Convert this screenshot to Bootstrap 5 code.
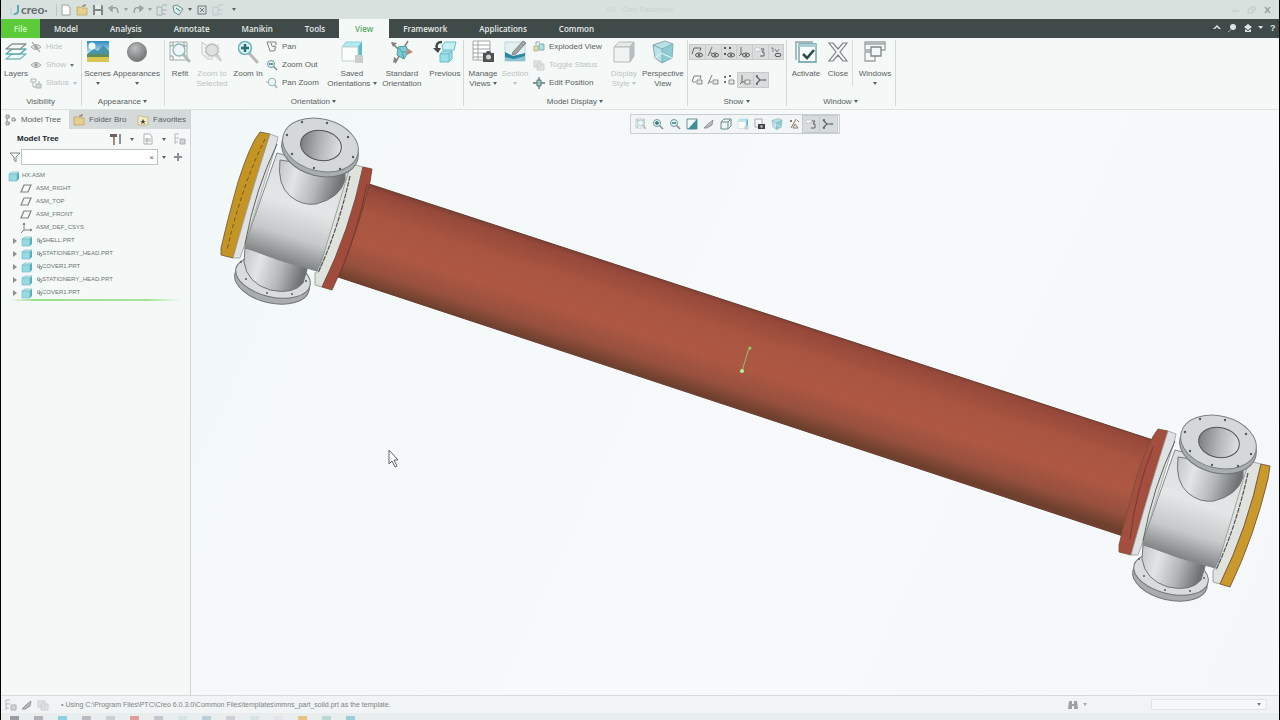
<!DOCTYPE html>
<html lang="en">
<head>
<meta charset="utf-8">
<meta name="viewport" content="width=device-width, initial-scale=1">
<title>Creo Parametric</title>
<link rel="stylesheet" href="https://cdn.jsdelivr.net/npm/bootstrap@5.3.0/dist/css/bootstrap.min.css">
<style>
  :root { --ink:#59605e; --dim:#bcc3c2; --teal:#4aa3ad; --rule:#d3dad8; --chrome:#f4f9f8; }
  body { font-family:"Liberation Sans",sans-serif; font-size:8px; line-height:10px; color:var(--ink); background:#000; }
  .btn { --bs-btn-font-size:8px; --bs-btn-line-height:10px; --bs-btn-padding-x:0; --bs-btn-padding-y:0; --bs-btn-border-width:0; --bs-btn-border-radius:0; --bs-btn-color:var(--ink); --bs-btn-disabled-color:var(--dim); --bs-btn-disabled-opacity:1; font-family:inherit; }
  svg { flex:none; display:block; }
  .i12 { width:12px; height:12px; }
  .i24 { width:24px; height:24px; }
  .caret { display:inline-block; border:2px solid transparent; border-top:3px solid currentColor; border-bottom:0; vertical-align:middle; flex:none; }
  .app { background:var(--chrome); margin:0 1px; }

  .titlebar { height:19px; background:#d9e1de; }
  .brand { font:bold 12px/14px "Lato",sans-serif; color:#626d6b; }
  .quick { border-left:1px solid #bcc6c3; margin-left:9px; padding-left:3px; }
  .wtitle { color:#cbd3d0; font-size:7px; }
  .tabbar { height:19px; background:#404a48; }
  .tabbar .btn { font:600 8px/19px "Open Sans",sans-serif; height:19px; color:#e6ebe9; text-align:center; }
  .tabbar .file-tab { background:#5bcb3a; color:#c9f7ba; width:39px; }
  .tabbar .active { background:var(--chrome); color:#5ca868; width:50px; }
  .tabset { gap:32px; margin:0 14px; }

  .ribbon { height:72px; border-bottom:1px solid #dbe2e1; }
  .rgroup { border-right:1px solid var(--rule); margin:2px 0 3px; padding-right:2px; padding-left:1px; }
  .g-vis { width:81px; } .g-app { width:83px; } .g-ori { width:299px; } .g-disp { width:224px; } .g-show { width:99px; } .g-win { width:109px; }
  .rbody { height:57px; flex:none; }
  .vrule { width:1px; height:46px; background:var(--rule); }
  .big { width:36px; flex:none; white-space:nowrap; }
  .big.narrow { width:28px; }
  .big.wide { width:50px; }
  .big svg { margin:0 auto 5px; }
  .stack { height:54px; margin-top:-2px; flex:none; white-space:nowrap; }
  .tog { width:16px; height:16px; background:#d9dedd; border:1px solid #c5cccb; border-right-width:0; }
  .tog:last-child { border-right-width:1px; }
  .tog.off { background:none; border-color:transparent; }
  .tog .i12 { margin:1px; }

  .tree { width:190px; border-right:1px solid #cfd6d5; }
  .tree-tabs { height:19px; background:#d4dada; }
  .tree-tabs .btn { height:19px; }
  .tree-tabs .active { background:var(--chrome); }
  .tree-tools { height:20px; }
  .tree-find input { height:16px; border:1px solid #bcc5c4; font-size:8px; padding:0 4px; border-radius:0; background:#fff; }
  .tree-list { font-size:6px; line-height:13px; color:#6b7271; }
  .tree-list li { height:13px; }
  .twist { border:3px solid transparent; border-left:4px solid #8b9291; border-right:0; width:4px; }
  .leaf { padding-left:19px; }
  .root { padding-left:7px; gap:2px; }
  .endline { height:2px; background:linear-gradient(90deg,transparent,#9be08c 15%,#a5e499 80%,transparent); }

  .view { background:linear-gradient(115deg,#f2f8f8,#f7f9fb 50%,#f5f8fb); min-height:0; }
  .floatbar { top:4px; border:1px solid #c8cfce; background:#f1f5f5; height:20px; padding:1px 2px; white-space:nowrap; }
  .floatbar .btn { width:17px; height:16px; padding:2px; }
  .floatbar .on { background:#d6dbdb; outline:1px solid #c5cbcb; }
  .model { width:100%; height:100%; }

  .status { height:18px; border-top:1px solid #d5dbdb; background:#f0f4f4; font-size:7px; color:#7c8382; }
  .status select { width:116px; height:11px; font-size:7px; padding:0; border:1px solid #dfe4e4; background:#f5f8f8; appearance:none; }
  .pick { margin-right:12px; }
  .pick .caret { right:6px; top:4px; }
  .taskbar { height:7px; background:#e8eeee; padding-left:9px; gap:15px; overflow:hidden; }
  .taskbar i { width:9px; height:4px; opacity:.6; }
</style>
</head>
<body class="vh-100 overflow-hidden">

<svg class="position-absolute" width="0" height="0" aria-hidden="true">
  <defs>
    <radialGradient id="ball" cx=".4" cy=".3" r=".8"><stop offset="0" stop-color="#b9bdbd"/><stop offset="1" stop-color="#676c6d"/></radialGradient>
    <linearGradient id="sky" x2="0" y2="1"><stop offset="0" stop-color="#2b8cc4"/><stop offset="1" stop-color="#bfe3ec"/></linearGradient>
  </defs>
  <symbol id="layers" viewBox="0 0 24 24"><g fill="#f5fbfb" stroke-width="1.4" stroke-linejoin="round"><path d="M2 19l6-5h14l-6 5z" stroke="#7fbcc0"/><path d="M2 14l6-5h14l-6 5z" stroke="#59a9ae"/><path d="M2 9l6-5h14l-6 5z" stroke="#8b9694"/></g></symbol>
  <symbol id="eye" viewBox="0 0 12 12"><path d="M1 6q5-5 10 0q-5 5-10 0z" fill="#e1e5e5" stroke="#a2a9a8"/><circle cx="6" cy="6" r="1.7" fill="#989f9e"/></symbol>
  <symbol id="hide" viewBox="0 0 12 12"><path d="M1 6q5-5 10 0q-5 5-10 0z" fill="#e1e5e5" stroke="#a2a9a8"/><circle cx="6" cy="6" r="1.7" fill="#989f9e"/><path d="M2 1l8 10" stroke="#9aa1a0" stroke-width="1.2"/></symbol>
  <symbol id="statusi" viewBox="0 0 12 12"><path d="M1 2h5v3H1zM3 5v5h3" fill="none" stroke="#adb4b3"/><path d="M6 7h5v4H6zM9 7V4" fill="#d2d8d7" stroke="#adb4b3"/></symbol>
  <symbol id="scene" viewBox="0 0 24 24"><path d="M1 1h22v12H1z" fill="url(#sky)"/><circle cx="6" cy="6" r="3.5" fill="#f0fafb"/><path d="M1 14l7-5 4 2 5-6 6 6v5H1z" fill="#4a94ab"/><path d="M1 14h22v4H1z" fill="#5d8c5d"/><path d="M1 17h22v5H1z" fill="#d8c552"/></symbol>
  <symbol id="sphere" viewBox="0 0 24 24"><circle cx="12" cy="12" r="9.5" fill="url(#ball)" stroke="#7e8484"/></symbol>
  <symbol id="refit" viewBox="0 0 24 24"><path d="M2 2h17v18H2z" fill="#f7fbfb" stroke="#a4acab"/><path d="M5 2v4H2M16 2v4h3M5 20v-4H2" fill="none" stroke="#8e9695"/><path d="M15 14l6 7" stroke="#b2b9b8" stroke-width="3" stroke-linecap="round"/><circle cx="11" cy="10" r="6" fill="#edf7f7" stroke="#8fb4b5" stroke-width="1.4"/></symbol>
  <symbol id="zsel" viewBox="0 0 24 24"><path d="M2 2l4 4M2 2v12l5 5h6" fill="none" stroke="#c3c9c8"/><path d="M5 5h14v12H5z" fill="#eceff0" stroke="#c7cdcc" stroke-dasharray="2 2"/><path d="M16 14l5 7" stroke="#cdd2d1" stroke-width="3"/><circle cx="12" cy="10" r="6" fill="#dde1e1" stroke="#b8bfbe" stroke-width="1.4"/></symbol>
  <symbol id="zin" viewBox="0 0 24 24"><path d="M13 13l8 9" stroke="#bdb9b5" stroke-width="3" stroke-linecap="round"/><circle cx="9" cy="8" r="6.5" fill="#d7f0f3" stroke="#74b4bb" stroke-width="1.5"/><path d="M9 4v8M5 8h8" stroke="#2b6d73" stroke-width="2.4"/></symbol>
  <symbol id="pan" viewBox="0 0 12 12"><path d="M1 1h9v3M1 1l3 9h4l2-4-4-1-1-3" fill="#f3f6f6" stroke="#7c8483"/><path d="M9 4v6" stroke="#a2a9a8"/></symbol>
  <symbol id="zout12" viewBox="0 0 12 12"><path d="M7 7l4 4" stroke="#8c9493" stroke-width="1.7"/><circle cx="5" cy="5" r="3.5" fill="#dff1f2" stroke="#6b9da0"/><path d="M3 5h4" stroke="#316b6f" stroke-width="1.3"/></symbol>
  <symbol id="zin12" viewBox="0 0 12 12"><path d="M7 7l4 4" stroke="#8c9493" stroke-width="1.7"/><circle cx="5" cy="5" r="3.5" fill="#dff1f2" stroke="#6b9da0"/><path d="M3 5h4M5 3v4" stroke="#316b6f" stroke-width="1.3"/></symbol>
  <symbol id="pz12" viewBox="0 0 12 12"><path d="M8 7l3 4" stroke="#a9b0af" stroke-width="1.6"/><circle cx="6" cy="5" r="3.7" fill="#eff8f8" stroke="#91b7b8"/><path d="M2 5H0" stroke="#91b7b8"/></symbol>
  <symbol id="saved" viewBox="0 0 24 24"><path d="M2 7l4-5h16l-4 5z" fill="#b6e8ef" stroke="#8ed2dc"/><path d="M18 7l4-5v14l-4 5z" fill="#5bbccb"/><path d="M2 7h16v14H2z" fill="#fafdfd" stroke="#c4d0d0"/><path d="M15 15h8v8h-8z" fill="#c9cfce"/></symbol>
  <symbol id="stdori" viewBox="0 0 24 24"><path d="M2 3l8 8M18 1l-6 10M5 23l6-10" stroke="#8b817b" stroke-width="1.6"/><path d="M8 7l8-1 2 6-4 7-7-4z" fill="#7ecad4" stroke="#4c9fab"/><path d="M8 7l4 5 6 0M12 12l2 7" stroke="#4c9fab" fill="none"/><path d="M17 8l6 4-6 3z" fill="#b98b73"/><path d="M1 2l6 1-4 4zM3 23l1-6 4 3z" fill="#7e8482"/></symbol>
  <symbol id="prev" viewBox="0 0 24 24"><path d="M9 6l3-4h11l-2 8h-11z" fill="#c8eff4" stroke="#6dbcc7"/><path d="M7 14l3-3h9v8l-3 3H7z" fill="#9ae0e9" stroke="#6dbcc7"/><path d="M7 14h9v8M16 14l3-3" fill="none" stroke="#6dbcc7"/><path d="M9 2Q2 2 4 9" fill="none" stroke="#414846" stroke-width="2.4"/><path d="M0 8h8l-3 5z" fill="#414846"/></symbol>
  <symbol id="manage" viewBox="0 0 24 24"><path d="M2 1h17v19H2z" fill="#fff" stroke="#a0a8a7"/><path d="M2 5h17M2 9h17M2 13h17M2 17h17M7 1v19" stroke="#9ba5a5"/><path d="M12 13h3l1-2h3l1 2h3v9H12z" fill="#4b5251"/><circle cx="17.500" cy="17" r="2.500" fill="#cfd4d4"/></symbol>
  <symbol id="section" viewBox="0 0 24 24"><path d="M2 2h20v19H2z" fill="#e4f1f3" stroke="#c0d2d5"/><path d="M2 21v-9l8 4 12-3v8z" fill="#2e86a0"/><path d="M2 17l9 2 11-3v5H2z" fill="#8cc3d2"/><path d="M20 1l3 2-10 11-4 1 1-3z" fill="#9fa5a4" stroke="#666d6c" stroke-width=".7"/></symbol>
  <symbol id="explode" viewBox="0 0 12 12"><path d="M1 5h4v5H1z" fill="#e3dfae" stroke="#b3b68f"/><path d="M6 3h5v6H6z" fill="#b6e0e2" stroke="#7eb1b2"/><path d="M3 4V1h4" fill="none" stroke="#9da5a3"/></symbol>
  <symbol id="toggle" viewBox="0 0 12 12"><path d="M1 2h7v6H1zM4 5h7v6H4z" fill="#e0e4e4" stroke="#c8cecd"/></symbol>
  <symbol id="editpos" viewBox="0 0 12 12"><path d="M4 3h4v6H4z" fill="#9fc5c7" stroke="#527d7e"/><path d="M0 6h4M8 6h4M6 0v3M6 9v3" stroke="#6a7776" stroke-width="1.3"/></symbol>
  <symbol id="cube" viewBox="0 0 24 24"><path d="M2 7l5-5h15l-4 5z" fill="#e5e9e9" stroke="#b3bbba"/><path d="M18 7l4-5v14l-4 6z" fill="#b9c0bf" stroke="#b3bbba"/><path d="M2 7h16v15H2z" fill="#f0f3f3" stroke="#b3bbba"/></symbol>
  <symbol id="cube12" viewBox="0 0 12 12"><path d="M1 4l3-3h7v7l-3 3H1z" fill="#eef6f5" stroke="#6c8c88"/><path d="M1 4h7v7M8 4l3-3" fill="none" stroke="#6c8c88"/></symbol>
  <symbol id="persp" viewBox="0 0 24 24"><path d="M2 5l12-4 8 3-1 14-10 5-7-5z" fill="#b9e2e8" stroke="#8ba7aa"/><path d="M2 5l9 4 11-5M11 9v14" fill="none" stroke="#7fa7ac"/><path d="M11 9l11-5-1 14-10 5z" fill="#7bc0ca" opacity=".7"/><path d="M4 18l6-5 11 5" fill="none" stroke="#e9fbfc"/></symbol>
  <symbol id="activate" viewBox="0 0 24 24"><path d="M2 20V2h17" fill="none" stroke="#8fa0a2" stroke-width="1.4"/><path d="M5 4h17v18H5z" fill="#fbfefe" stroke="#5d9ca5" stroke-width="1.3"/><path d="M5 4h17v3H5z" fill="#a9cdd2"/><path d="M9 14l4 4 7-8" fill="none" stroke="#2b4c50" stroke-width="2.6"/></symbol>
  <symbol id="closeb" viewBox="0 0 24 24"><path d="M3 3h4l5 6 5-6h4l-7 9 7 9h-4l-5-6-5 6H3l7-9z" fill="#f6f8f8" stroke="#7d8584" stroke-width="1.2"/></symbol>
  <symbol id="wins" viewBox="0 0 24 24"><g fill="#f5f8f8" stroke="#9aa2a1" stroke-width="1.3"><path d="M2 2h20v8H2zM2 4h20"/><path d="M2 12h10v9H2z"/><path d="M8 7h10v9H8z" stroke="#7d8685"/></g></symbol>
  <symbol id="plane" viewBox="0 0 12 12"><path d="M1 9l3-7h7L8 9z" fill="none" stroke="#7e8180" stroke-width="1.200"/></symbol>
  <symbol id="csys" viewBox="0 0 12 12"><path d="M4 1v7h8M4 8l-3 3M3 3l1-2 1 2M10 7l2 1-2 1" fill="none" stroke="#7e8180"/></symbol>
  <symbol id="part" viewBox="0 0 12 12"><path d="M1 4l3-2h7L9 4z" fill="#c7eff3" stroke="#69b5bf" stroke-width=".6"/><path d="M9 4l2-2v7l-2 2z" fill="#5badb8"/><path d="M1 4h8v7H1z" fill="#96dbe3" stroke="#69b5bf" stroke-width=".6"/></symbol>
  <symbol id="link" viewBox="0 0 6 6"><path d="M.5.500h3v3h-3zM2.500 2.500h3v3h-2z" fill="none" stroke="#7e8685" stroke-width=".9"/></symbol>
  <symbol id="t1" viewBox="0 0 12 12"><path d="M1 8l2-6h7L9 5" fill="none" stroke="#636968"/><ellipse cx="8" cy="9" rx="3.500" ry="2" fill="#d4d8d7" stroke="#515756"/><circle cx="8" cy="9" r="1" fill="#444"/></symbol>
  <symbol id="t2" viewBox="0 0 12 12"><path d="M1 10L5 1M2 7h3" fill="none" stroke="#6d7372"/><ellipse cx="8" cy="9" rx="3.500" ry="2" fill="#d4d8d7" stroke="#515756"/><circle cx="8" cy="9" r="1" fill="#444"/></symbol>
  <symbol id="t3" viewBox="0 0 12 12"><path d="M1 1l2 2m0-2L1 3M6 1l2 2m0-2L6 3M1 7l2 2m0-2L1 9" stroke="#515756"/><ellipse cx="8" cy="9" rx="3.500" ry="2" fill="#d4d8d7" stroke="#515756"/><circle cx="8" cy="9" r="1" fill="#444"/></symbol>
  <symbol id="t4" viewBox="0 0 12 12"><path d="M3 1v7h3M3 8l-2 2" fill="none" stroke="#636968"/><ellipse cx="8" cy="9" rx="3.500" ry="2" fill="#d4d8d7" stroke="#515756"/><circle cx="8" cy="9" r="1" fill="#444"/></symbol>
  <symbol id="t5" viewBox="0 0 12 12"><path d="M1 2h5v3H1z" fill="#fafcfc" stroke="#b9bfbe" stroke-width=".7"/><path d="M7 3h3L8 6h2v4H6" fill="none" stroke="#5d6362"/></symbol>
  <symbol id="t6" viewBox="0 0 12 12"><path d="M1 2h2v4M5 3l2 3 2-3" fill="none" stroke="#7a807f"/><ellipse cx="8" cy="9" rx="3" ry="1.700" fill="#d4d8d7" stroke="#515756"/></symbol>
  <symbol id="t7" viewBox="0 0 12 12"><path d="M1 8l2-6h7L9 5M2 8h3" fill="none" stroke="#7a807f"/><path d="M6 6h5v4H6z" fill="#e9eceb" stroke="#6d7372" stroke-width=".8"/></symbol>
  <symbol id="t8" viewBox="0 0 12 12"><path d="M1 10L5 1M2 8h3" fill="none" stroke="#7a807f"/><path d="M6 6h5v4H6z" fill="#e9eceb" stroke="#6d7372" stroke-width=".8"/></symbol>
  <symbol id="t9" viewBox="0 0 12 12"><path d="M1 2l2 2m0-2L1 4M6 1l2 2m0-2L6 3M1 7l2 2m0-2L1 9" stroke="#6d7372"/><path d="M6 6h5v4H6z" fill="#e9eceb" stroke="#6d7372" stroke-width=".8"/></symbol>
  <symbol id="t11" viewBox="0 0 12 12"><path d="M3 1v7h3M3 8l-2 2" fill="none" stroke="#636968"/><path d="M6 6h5v4H6z" fill="#e9eceb" stroke="#6d7372" stroke-width=".8"/></symbol>
  <symbol id="filt" viewBox="0 0 12 12"><path d="M2 2l2 2m0-2L2 4M8 1l-5 9M7 6l3 4H5zM9 2l2 2" fill="none" stroke="#86796c"/></symbol>
  <symbol id="t10" viewBox="0 0 12 12"><path d="M1 2l4 4-4 4M5 6h5" fill="none" stroke="#5b6160" stroke-width="1.200"/><circle cx="10" cy="6" r="1.300" fill="#8b9190"/><circle cx="2" cy="2" r="1" fill="#5b6160"/><circle cx="2" cy="10" r="1" fill="#5b6160"/></symbol>
  <symbol id="repaint" viewBox="0 0 12 12"><path d="M1 1h10v10H1z" fill="#f0fafa" stroke="#6e9092"/><path d="M11 1v10H2z" fill="#3b8f96"/></symbol>
  <symbol id="brush" viewBox="0 0 12 12"><path d="M1 10l4-4 5-4-1 5-5 3z" fill="#b6bcbb" stroke="#7f8685" stroke-width=".8"/></symbol>
  <symbol id="cam" viewBox="0 0 12 12"><path d="M1 1h7v8H1z" fill="#f7f9f9" stroke="#a6adac"/><path d="M4 6h7v5H4z" fill="#3f4544"/><circle cx="7.500" cy="8.500" r="1.300" fill="#b9bfbe"/></symbol>
  <symbol id="doc" viewBox="0 0 12 12"><path d="M2 1h6l2 3v7H2z" fill="#fff" stroke="#98a09f"/></symbol>
  <symbol id="sheet" viewBox="0 0 12 12"><path d="M2 1h6l2 3v7H2zM3 6h6M3 8h6M5 5v6" fill="#fff" stroke="#98a09f" stroke-width=".8"/></symbol>
  <symbol id="folder" viewBox="0 0 12 12"><path d="M1 3h4l1 1h5v7H1z" fill="#e6cf8f" stroke="#bba663" stroke-width=".8"/><path d="M6 2h3V0" fill="none" stroke="#7a6a44"/></symbol>
  <symbol id="disk" viewBox="0 0 12 12"><path d="M1 1h9l1 1v9H1z" fill="#7d8887"/><path d="M3 1h6v4H3zM3 7h6v4H3z" fill="#e5ebea"/></symbol>
  <symbol id="undo" viewBox="0 0 12 12"><path d="M1 4l3-2v5zM3 5q7-4 7 4" fill="none" stroke="#8d9897" stroke-width="1.200"/></symbol>
  <symbol id="redo" viewBox="0 0 12 12"><path d="M11 4L8 2v5zM9 5Q2 1 2 9" fill="none" stroke="#8d9897" stroke-width="1.200"/></symbol>
  <symbol id="regen" viewBox="0 0 12 12"><path d="M1 3h5v8H1zM6 1h5M6 6h5M6 10h4" fill="none" stroke="#a4b1b0"/></symbol>
  <symbol id="regen2" viewBox="0 0 12 12"><path d="M1 2l4-1 6 4-4 6-5-3z" fill="#d9eced" stroke="#708c8e"/><path d="M4 4l4 3" stroke="#477274"/></symbol>
  <symbol id="xbox" viewBox="0 0 12 12"><path d="M2 2h8v8H2zM4 4l4 4M8 4L4 8" fill="none" stroke="#6e7978"/></symbol>
  <symbol id="star" viewBox="0 0 12 12"><path d="M1 2h4l1 1h5v8H1z" fill="#f3e9c4" stroke="#c2b37c" stroke-width=".8"/><path d="M6 5l1 2h2L7 8l1 2-2-1-2 1 1-2-2-1h2z" fill="#3f4544"/></symbol>
  <symbol id="tri" viewBox="0 0 12 12"><path d="M2 1v10M2 3h3M2 9h3M8 6h3" stroke="#8c7f75" fill="none"/><path d="M1 1h3v3H1zM1 8h3v3H1zM7 4h3v3H7z" fill="#d8dedd" stroke="#7d8483" stroke-width=".8"/></symbol>
  <symbol id="hammer" viewBox="0 0 12 12"><path d="M0 1h7v3H0z" fill="#6e635a"/><path d="M3 4h2v8H3z" fill="#a08d7b"/><path d="M9 1h2v10H9z" fill="#8b9493"/></symbol>
  <symbol id="treeset" viewBox="0 0 12 12"><path d="M1 1h4M1 5h4M1 9h3M1 1v10" fill="none" stroke="#b2b8b7"/><path d="M6 6h5v5H6z" fill="#d0d5d4" stroke="#aab1b0"/></symbol>
  <symbol id="funnel" viewBox="0 0 12 12"><path d="M1 2h10L7 6v5L5 9V6z" fill="none" stroke="#7e8685"/></symbol>
  <symbol id="bino" viewBox="0 0 12 12"><path d="M2 2h3v3h2V2h3l1 8H7V7H5v3H1z" fill="#9aa1a0"/></symbol>
</svg>

<div class="app vh-100 d-flex flex-column">
  <header class="titlebar d-flex align-items-center position-relative ps-2">
    <svg width="12" height="12" viewBox="0 0 12 12"><path d="M2 3v5q0 3 3 3" fill="none" stroke="#b0dadb" stroke-width="1.500"/><path d="M9 1v6q0 3-4 3" fill="none" stroke="#59a9b2" stroke-width="2"/></svg>
    <span class="brand">creo<small>·</small></span>
    <span class="quick d-flex align-items-center gap-1">
      <button class="btn" aria-label="New"><svg class="i12"><use href="#doc"/></svg></button>
      <button class="btn" aria-label="Open"><svg class="i12"><use href="#folder"/></svg></button>
      <button class="btn" aria-label="Save"><svg class="i12"><use href="#disk"/></svg></button>
      <button class="btn d-flex align-items-center gap-1" aria-label="Undo"><svg class="i12"><use href="#undo"/></svg><span class="caret opacity-50"></span></button>
      <button class="btn d-flex align-items-center gap-1" aria-label="Redo"><svg class="i12"><use href="#redo"/></svg><span class="caret opacity-50"></span></button>
      <button class="btn" aria-label="Regenerate"><svg class="i12"><use href="#regen"/></svg></button>
      <button class="btn d-flex align-items-center gap-1" aria-label="Repaint"><svg class="i12"><use href="#regen2"/></svg><span class="caret"></span></button>
      <button class="btn" aria-label="Close window"><svg class="i12"><use href="#xbox"/></svg></button>
      <button class="btn opacity-50" aria-label="Windows"><svg class="i12"><use href="#regen"/></svg></button>
      <button class="btn ps-1 d-flex" aria-label="Customize"><span class="caret"></span></button>
    </span>
    <span class="wtitle position-absolute start-50 translate-middle-x">HX - Creo Parametric</span>
    <span class="ms-auto me-1 d-flex gap-2">
      <svg width="44" height="10" viewBox="0 0 44 10"><path d="M1 6h7M17 4h5v4h-5zM19 2h5v4" fill="none" stroke="#bdc6c3"/><path d="M34 2l5 6M39 2l-5 6" stroke="#9ba4a1" stroke-width="1.500"/></svg>
    </span>
  </header>

  <nav class="tabbar d-flex">
    <button class="btn file-tab">File</button>
    <div class="tabset d-flex">
      <button class="btn">Model</button>
      <button class="btn">Analysis</button>
      <button class="btn">Annotate</button>
      <button class="btn">Manikin</button>
      <button class="btn">Tools</button>
    </div>
    <button class="btn active">View</button>
    <div class="tabset d-flex">
      <button class="btn">Framework</button>
      <button class="btn">Applications</button>
      <button class="btn">Common</button>
    </div>
    <svg class="ms-auto" width="68" height="19" viewBox="0 0 68 19" fill="#dde5e2"><path d="M2 10l4-4 4 4H8L6 8l-2 2z"/><circle cx="22" cy="8" r="3"/><path d="M17 13l4-3" stroke="#98a3a0"/><path d="M33 8l4-3 4 3-4 3zM34 10v3h6v-3l-3 2z"/><path d="M47 7h5l-2 3z"/><text x="59" y="12" font-size="9" font-weight="bold">?</text></svg>
  </nav>

  <section class="ribbon d-flex">
    <div class="rgroup g-vis d-flex flex-column">
      <div class="rbody d-flex align-items-start">
        <button class="btn big narrow"><svg class="i24"><use href="#layers"/></svg>Layers</button>
        <div class="stack d-flex flex-column justify-content-around align-items-start">
          <button class="btn d-flex gap-1 align-items-center" disabled><svg class="i12"><use href="#hide"/></svg>Hide</button>
          <button class="btn d-flex gap-1 align-items-center" disabled><svg class="i12"><use href="#eye"/></svg>Show <span class="caret text-secondary"></span></button>
          <button class="btn d-flex gap-1 align-items-center" disabled><svg class="i12"><use href="#statusi"/></svg>Status <span class="caret"></span></button>
        </div>
      </div>
      <div class="text-center">Visibility</div>
    </div>
    <div class="rgroup g-app d-flex flex-column">
      <div class="rbody d-flex align-items-start justify-content-center">
        <button class="btn big narrow"><svg class="i24"><use href="#scene"/></svg>Scenes<br><span class="caret"></span></button>
        <button class="btn big wide"><svg class="i24"><use href="#sphere"/></svg>Appearances<br><span class="caret"></span></button>
      </div>
      <div class="text-center">Appearance <span class="caret"></span></div>
    </div>
    <div class="rgroup g-ori d-flex flex-column">
      <div class="rbody d-flex align-items-start">
        <button class="btn big narrow"><svg class="i24"><use href="#refit"/></svg>Refit</button>
        <button class="btn big" disabled><svg class="i24"><use href="#zsel"/></svg>Zoom to<br>Selected</button>
        <button class="btn big"><svg class="i24"><use href="#zin"/></svg>Zoom In</button>
        <div class="stack d-flex flex-column justify-content-around align-items-start">
          <button class="btn d-flex gap-1 align-items-center"><svg class="i12"><use href="#pan"/></svg>Pan</button>
          <button class="btn d-flex gap-1 align-items-center"><svg class="i12"><use href="#zout12"/></svg>Zoom Out</button>
          <button class="btn d-flex gap-1 align-items-center"><svg class="i12"><use href="#pz12"/></svg>Pan Zoom</button>
        </div>
        <span class="vrule mx-1"></span>
        <button class="btn big wide"><svg class="i24"><use href="#saved"/></svg>Saved<br>Orientations <span class="caret"></span></button>
        <button class="btn big wide"><svg class="i24"><use href="#stdori"/></svg>Standard<br>Orientation</button>
        <button class="btn big"><svg class="i24"><use href="#prev"/></svg>Previous</button>
      </div>
      <div class="text-center">Orientation <span class="caret"></span></div>
    </div>
    <div class="rgroup g-disp d-flex flex-column">
      <div class="rbody d-flex align-items-start">
        <button class="btn big"><svg class="i24"><use href="#manage"/></svg>Manage<br>Views <span class="caret"></span></button>
        <button class="btn big narrow" disabled><svg class="i24"><use href="#section"/></svg>Section<br><span class="caret"></span></button>
        <div class="stack ps-1 d-flex flex-column justify-content-around align-items-start">
          <button class="btn d-flex gap-1 align-items-center"><svg class="i12"><use href="#explode"/></svg>Exploded View</button>
          <button class="btn d-flex gap-1 align-items-center" disabled><svg class="i12"><use href="#toggle"/></svg>Toggle Status</button>
          <button class="btn d-flex gap-1 align-items-center"><svg class="i12"><use href="#editpos"/></svg>Edit Position</button>
        </div>
        <span class="vrule mx-1"></span>
        <button class="btn big narrow" disabled><svg class="i24"><use href="#cube"/></svg>Display<br>Style <span class="caret"></span></button>
        <button class="btn big wide"><svg class="i24"><use href="#persp"/></svg>Perspective<br>View</button>
      </div>
      <div class="text-center">Model Display <span class="caret"></span></div>
    </div>
    <div class="rgroup g-show d-flex flex-column">
      <div class="rbody d-flex flex-column gap-2 pt-1">
        <div class="d-flex mb-1">
          <button class="btn tog" aria-label="Plane tags"><svg class="i12"><use href="#t1"/></svg></button><button class="btn tog" aria-label="Axis tags"><svg class="i12"><use href="#t2"/></svg></button><button class="btn tog" aria-label="Point tags"><svg class="i12"><use href="#t3"/></svg></button><button class="btn tog" aria-label="Csys tags"><svg class="i12"><use href="#t4"/></svg></button><button class="btn tog" aria-label="Annotations"><svg class="i12"><use href="#t5"/></svg></button><button class="btn tog" aria-label="Notes"><svg class="i12"><use href="#t6"/></svg></button>
        </div>
        <div class="d-flex">
          <button class="btn tog off" aria-label="Planes"><svg class="i12"><use href="#t7"/></svg></button><button class="btn tog off" aria-label="Axes"><svg class="i12"><use href="#t8"/></svg></button><button class="btn tog off" aria-label="Points"><svg class="i12"><use href="#t9"/></svg></button><button class="btn tog" aria-label="Csys"><svg class="i12"><use href="#t11"/></svg></button><button class="btn tog" aria-label="Spin center"><svg class="i12"><use href="#t10"/></svg></button>
        </div>
      </div>
      <div class="text-center">Show <span class="caret"></span></div>
    </div>
    <div class="rgroup g-win d-flex flex-column">
      <div class="rbody d-flex align-items-start">
        <button class="btn big"><svg class="i24"><use href="#activate"/></svg>Activate</button>
        <button class="btn big narrow"><svg class="i24"><use href="#closeb"/></svg>Close</button>
        <span class="vrule"></span>
        <button class="btn big ms-1"><svg class="i24"><use href="#wins"/></svg>Windows<br><span class="caret"></span></button>
      </div>
      <div class="text-center">Window <span class="caret"></span></div>
    </div>
  </section>

  <main class="d-flex flex-grow-1 overflow-hidden">
    <aside class="tree flex-shrink-0 d-flex flex-column">
      <div class="tree-tabs d-flex">
        <button class="btn active d-flex align-items-center gap-1 ps-1 pe-2"><svg class="i12"><use href="#tri"/></svg>Model Tree</button>
        <button class="btn d-flex align-items-center gap-1 px-1"><svg class="i12"><use href="#folder"/></svg>Folder Bro</button>
        <button class="btn d-flex align-items-center gap-1 ms-auto pe-1"><svg class="i12"><use href="#star"/></svg>Favorites</button>
      </div>
      <div class="tree-tools d-flex align-items-center gap-2 pe-1">
        <b class="ms-3 me-auto text-dark">Model Tree</b>
        <button class="btn d-flex align-items-center gap-2" aria-label="Settings"><svg class="i12"><use href="#hammer"/></svg><span class="caret"></span></button>
        <button class="btn d-flex align-items-center gap-2" aria-label="Columns"><svg class="i12"><use href="#sheet"/></svg><span class="caret"></span></button>
        <button class="btn" aria-label="Tree options"><svg class="i12"><use href="#treeset"/></svg></button>
      </div>
      <div class="tree-find d-flex align-items-center ps-2 pe-2">
        <svg class="i12"><use href="#funnel"/></svg>
        <span class="flex-grow-1 position-relative d-flex"><input class="w-100" type="text" aria-label="Search tree"><button class="btn position-absolute end-0 pe-1 pt-1" aria-label="Clear">×</button></span>
        <span class="caret mx-1"></span>
        <button class="btn ps-1" aria-label="Add"><svg width="8" height="8" viewBox="0 0 8 8"><path d="M4 0v8M0 4h8" stroke="#8a9190" stroke-width="2"/></svg></button>
      </div>
      <ul class="tree-list list-unstyled mb-0 pt-1">
        <li class="root d-flex align-items-center"><svg class="i12"><use href="#part"/></svg>HX.ASM</li>
        <li class="leaf d-flex align-items-center gap-1"><svg class="i12"><use href="#plane"/></svg>ASM_RIGHT</li>
        <li class="leaf d-flex align-items-center gap-1"><svg class="i12"><use href="#plane"/></svg>ASM_TOP</li>
        <li class="leaf d-flex align-items-center gap-1"><svg class="i12"><use href="#plane"/></svg>ASM_FRONT</li>
        <li class="leaf d-flex align-items-center gap-1"><svg class="i12"><use href="#csys"/></svg>ASM_DEF_CSYS</li>
        <li class="d-flex align-items-center ps-2 ms-1"><span class="twist me-1"></span><svg class="i12 me-1"><use href="#part"/></svg><svg width="5" height="6"><use href="#link"/></svg>SHELL.PRT</li>
        <li class="d-flex align-items-center ps-2 ms-1"><span class="twist me-1"></span><svg class="i12 me-1"><use href="#part"/></svg><svg width="5" height="6"><use href="#link"/></svg>STATIONERY_HEAD.PRT</li>
        <li class="d-flex align-items-center ps-2 ms-1"><span class="twist me-1"></span><svg class="i12 me-1"><use href="#part"/></svg><svg width="5" height="6"><use href="#link"/></svg>COVER1.PRT</li>
        <li class="d-flex align-items-center ps-2 ms-1"><span class="twist me-1"></span><svg class="i12 me-1"><use href="#part"/></svg><svg width="5" height="6"><use href="#link"/></svg>STATIONERY_HEAD.PRT</li>
        <li class="d-flex align-items-center ps-2 ms-1"><span class="twist me-1"></span><svg class="i12 me-1"><use href="#part"/></svg><svg width="5" height="6"><use href="#link"/></svg>COVER1.PRT</li>
      </ul>
      <div class="endline mx-2"></div>
    </aside>

    <section class="view flex-grow-1 position-relative">
      <svg class="model" viewBox="191 110 1088 585" role="img" aria-label="Heat exchanger assembly">
        <defs>
          <linearGradient id="tube" gradientUnits="userSpaceOnUse" x1="369" y1="184" x2="339" y2="277"><stop offset="0" stop-color="#7c4034"/><stop offset=".06" stop-color="#96493a"/><stop offset=".3" stop-color="#a95541"/><stop offset=".6" stop-color="#ae5843"/><stop offset=".85" stop-color="#96503d"/><stop offset="1" stop-color="#70402f"/></linearGradient>
          <linearGradient id="drum" gradientUnits="userSpaceOnUse" x1="312" y1="160" x2="280" y2="260"><stop offset="0" stop-color="#d9dcdd"/><stop offset=".45" stop-color="#e4e6e7"/><stop offset=".75" stop-color="#c6c9ca"/><stop offset="1" stop-color="#808485"/></linearGradient>
          <linearGradient id="neck" x1="0" x2="1" y1="0" y2=".2"><stop offset="0" stop-color="#c3c6c7"/><stop offset=".3" stop-color="#e2e4e5"/><stop offset=".65" stop-color="#b4b7b8"/><stop offset="1" stop-color="#6e7273"/></linearGradient>
          <linearGradient id="bore" x1="0" x2="1"><stop offset="0" stop-color="#7b7f80"/><stop offset=".5" stop-color="#b4b7b8"/><stop offset="1" stop-color="#e0e2e3"/></linearGradient>
          <g id="head" stroke-linejoin="round">
            <g stroke="#6f7576" stroke-width="1">
              <ellipse cx="272" cy="282" rx="38" ry="21" transform="rotate(13 272 282)" fill="#a9adae"/>
              <ellipse cx="273" cy="277" rx="38" ry="20" transform="rotate(13 273 277)" fill="#d9dcdd"/>
              <path d="M245 248L244 262Q247 283 270 290Q293 295 303 283L308 266Z" fill="url(#neck)"/>
            </g>
            <g fill="#565c5d"><circle cx="241" cy="262" r="1"/><circle cx="246" cy="279" r="1"/><circle cx="267" cy="293" r="1"/><circle cx="292" cy="294" r="1"/><circle cx="306" cy="281" r="1"/></g>
            <path d="M277 153L356 174L317 271Q280 262 244 247Z" fill="url(#drum)" stroke="#83898a"/>
            <path d="M260 132L270 134L233 258L221 255V248Q230 210 238 182Q250 144 260 132Z" fill="var(--front)" stroke="#6d5536" stroke-width=".8"/>
            <path d="M265 139Q242 185 227 250" fill="none" stroke="#5c4420" stroke-width="1" stroke-dasharray="4 3" opacity="var(--bolts)"/>
            <path d="M270 134L278 137L276 146L244 247L240 258L233 258Q252 190 270 134Z" fill="#dfe2e0" stroke="#989d9c" stroke-width=".8"/>
            <path d="M277 144Q255 190 245 244" fill="none" stroke="#5c6263" stroke-width="1"/>
            <path d="M350 167L355 165L363 167Q350 230 322 287L315 285V273L319 270Z" fill="#dfe2dd" stroke="#8e9392" stroke-width=".8"/>
            <path d="M363 167L372 169L370 182Q356 240 332 290L322 287Q350 230 363 167Z" fill="var(--back)" stroke="#6d4532" stroke-width=".8"/>
            <path d="M350 176Q338 230 318 273" fill="none" stroke="#4f5556" stroke-width="1.200" stroke-dasharray="5 1"/>
            <path d="M280 160Q277 185 290 196Q302 206 316 204Q340 198 345 180V170Z" fill="url(#neck)" stroke="#717778"/>
            <ellipse cx="320" cy="150" rx="39" ry="26" transform="rotate(14 320 150)" fill="#a8adae" stroke="#6f7576"/>
            <ellipse cx="320.500" cy="145" rx="38.500" ry="26" transform="rotate(14 320.500 145)" fill="#d4d8d9" stroke="#7b8182"/>
            <ellipse cx="321" cy="145.500" rx="20.500" ry="15" transform="rotate(10 321 145.500)" fill="url(#bore)" stroke="#4f5556"/>
            <g fill="#555b5c"><circle cx="302" cy="122" r="1.200"/><circle cx="327" cy="123" r="1.200"/><circle cx="348" cy="137" r="1.200"/><circle cx="353" cy="157" r="1.200"/><circle cx="340" cy="169" r="1.200"/><circle cx="314" cy="168" r="1.200"/><circle cx="292" cy="154" r="1.200"/><circle cx="287" cy="135" r="1.200"/></g>
          </g>
        </defs>
        <path d="M366 183L1156 441L1123 536L335 276Z" fill="url(#tube)" stroke="#673b2e"/>
        <use href="#head" style="--front:#c49525;--back:#a04b3c;--bolts:.8"/>
        <use href="#head" transform="translate(898 297)" style="--front:#a34e3e;--back:#c99a2b;--bolts:0"/>
        <path d="M367 184Q358 230 339 277M1153 447Q1136 490 1130 539" fill="none" stroke="#713b2f"/>
        <path d="M749 348L742 371" stroke="#91c26c"/><circle cx="750" cy="348" r="1.500" fill="#8bd36b"/><circle cx="742" cy="371" r="2" fill="#b4f3a0"/>
        <path d="M389 450v14l3-3 3 6 2-1-3-6h4z" fill="#fff" stroke="#5e6465"/>
      </svg>
      <div class="floatbar d-flex position-absolute start-50 translate-middle-x">
        <button class="btn" aria-label="Refit"><svg class="i12"><use href="#refit"/></svg></button>
        <button class="btn" aria-label="Zoom in"><svg class="i12"><use href="#zin12"/></svg></button>
        <button class="btn" aria-label="Zoom out"><svg class="i12"><use href="#zout12"/></svg></button>
        <button class="btn" aria-label="Repaint"><svg class="i12"><use href="#repaint"/></svg></button>
        <button class="btn" aria-label="Rendering"><svg class="i12"><use href="#brush"/></svg></button>
        <button class="btn" aria-label="Display style"><svg class="i12"><use href="#cube12"/></svg></button>
        <button class="btn" aria-label="Orientations"><svg class="i12"><use href="#saved"/></svg></button>
        <button class="btn" aria-label="View manager"><svg class="i12"><use href="#cam"/></svg></button>
        <button class="btn" aria-label="Perspective"><svg class="i12"><use href="#persp"/></svg></button>
        <button class="btn" aria-label="Datum filters"><svg class="i12"><use href="#filt"/></svg></button>
        <button class="btn on" aria-label="Annotations"><svg class="i12"><use href="#t5"/></svg></button>
        <button class="btn on" aria-label="Spin center"><svg class="i12"><use href="#t10"/></svg></button>
      </div>
    </section>
  </main>

  <footer>
    <div class="status d-flex align-items-center">
      <span class="d-flex gap-1 ps-1"><svg class="i12"><use href="#treeset"/></svg><svg class="i12"><use href="#brush"/></svg><svg class="i12"><use href="#toggle"/></svg></span>
      <span class="ps-2 ms-1">• Using C:\Program Files\PTC\Creo 6.0.3.0\Common Files\templates\mmns_part_solid.prt as the template.</span>
      <button class="btn ms-auto me-5 d-flex align-items-center gap-1" aria-label="Find"><svg class="i12"><use href="#bino"/></svg><span class="caret opacity-50"></span></button>
      <span class="pick position-relative ms-3"><select class="d-block" aria-label="Selection filter"><option></option></select><span class="caret position-absolute"></span></span>
    </div>
    <div class="taskbar d-flex align-items-end">
      <i style="background:#667"></i><i style="background:#889"></i><i style="background:#4cc3d6"></i><i style="background:#99a"></i><i style="background:#b7bdc4"></i><i style="background:#d66"></i><i style="background:#aab"></i><i style="background:#cdd"></i><i style="background:#9bc"></i><i style="background:#bbc"></i><i style="background:#cdd"></i><i style="background:#dde"></i><i style="background:#e6a63c"></i><i style="background:#9cb"></i><i style="background:#6bc"></i>
    </div>
  </footer>
</div>
<script src="https://cdn.jsdelivr.net/npm/bootstrap@5.3.0/dist/js/bootstrap.bundle.min.js"></script>
</body>
</html>
